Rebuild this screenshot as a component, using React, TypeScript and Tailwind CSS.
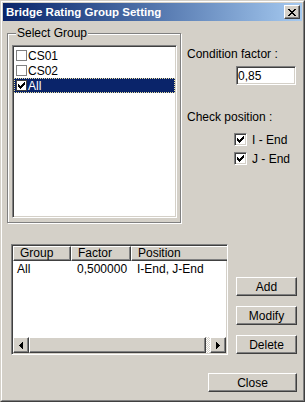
import React from "react";

const raised =
  "border border-t-white border-l-white border-r-[#404040] border-b-[#404040] shadow-[inset_-1px_-1px_0_#808080] bg-[#d4d0c8]";
const sunken =
  "border border-t-[#808080] border-l-[#808080] border-r-white border-b-white shadow-[inset_1px_1px_0_#404040,inset_-1px_-1px_0_#d4d0c8]";

function CheckPixels({ ox, oy }: { ox: number; oy: number }) {
  const cols = [2, 3, 4, 3, 2, 1, 0];
  return (
    <>
      {cols.map((y, i) => (
        <rect key={i} x={ox + i} y={oy + y} width={1} height={3} fill="#000" />
      ))}
    </>
  );
}

function ListCheck({ checked }: { checked?: boolean }) {
  return (
    <div
      className={`w-[11px] h-[11px] shrink-0 bg-white border ${
        checked ? "border-[#404040]" : "border-[#808080]"
      }`}
    >
      {checked && (
        <svg width="9" height="9" shapeRendering="crispEdges">
          <CheckPixels ox={1} oy={1} />
        </svg>
      )}
    </div>
  );
}

function ClassicCheck() {
  return (
    <div className={`w-[13px] h-[13px] shrink-0 bg-white ${sunken}`}>
      <svg width="11" height="11" shapeRendering="crispEdges">
        <CheckPixels ox={2} oy={2} />
      </svg>
    </div>
  );
}

function Btn({ label, w }: { label: string; w: string }) {
  return (
    <div className={`${w} h-[19px] ${raised} flex items-center justify-center leading-[14px]`}>
      {label}
    </div>
  );
}

function Arrow({ dir }: { dir: "l" | "r" }) {
  return (
    <div className={`w-[16px] h-full shrink-0 ${raised} flex items-center justify-center`}>
      <svg width="4" height="7" shapeRendering="crispEdges">
        {dir === "l" ? (
          <polygon points="4,0 4,7 0,3.5" fill="#000" />
        ) : (
          <polygon points="0,0 0,7 4,3.5" fill="#000" />
        )}
      </svg>
    </div>
  );
}

export default function App() {
  return (
    <div className="w-[305px] h-[402px] bg-[#d4d0c8] font-['Liberation_Sans',Arial,sans-serif] text-[12px] text-black border border-t-[#d4d0c8] border-l-[#d4d0c8] border-r-[#404040] border-b-[#404040]">
      <div className="h-full border border-t-white border-l-white border-r-[#808080] border-b-[#808080] p-px flex flex-col">
        {/* Title bar */}
        <div className="h-[18px] shrink-0 flex items-center justify-between pl-[3px] pr-[2px] bg-linear-to-r from-[#0a246a] to-[#a6caf0]">
          <span className="text-white font-bold text-[11.5px] leading-[13px]">
            Bridge Rating Group Setting
          </span>
          <div className={`w-[16px] h-[14px] ${raised} flex items-center justify-center`}>
            <svg width="8" height="7" shapeRendering="crispEdges">
              <path d="M0.5 0 L7.5 7 M7.5 0 L0.5 7" stroke="#000" strokeWidth="1.6" />
            </svg>
          </div>
        </div>

        {/* Top section */}
        <div className="flex mt-[6px] shrink-0">
          <div className="ml-[4px] w-[174px] h-[196px] relative">
            <div className="mt-[6px] h-[190px] border border-[#808080] shadow-[inset_1px_1px_0_white,1px_1px_0_white] pt-[11px] pl-[4px]">
              <div className={`w-[165px] h-[173px] bg-white p-px ${sunken}`}>
                <div className="pt-px flex flex-col">
                  <div className="h-[15px] flex items-center pl-[2px]">
                    <ListCheck />
                    <span className="ml-[1px] leading-[14px]">CS01</span>
                  </div>
                  <div className="h-[15px] flex items-center pl-[2px]">
                    <ListCheck />
                    <span className="ml-[1px] leading-[14px]">CS02</span>
                  </div>
                  <div className="h-[15px] flex items-center pl-px bg-[#0a246a] text-white border border-dotted border-[#e8e0a0]">
                    <ListCheck checked />
                    <span className="ml-[1px] leading-[14px]">All</span>
                  </div>
                </div>
              </div>
            </div>
            <span className="absolute left-[9px] top-0 px-[1px] bg-[#d4d0c8] leading-[13px]">
              Select Group
            </span>
          </div>

          <div className="ml-[6px] flex flex-col">
            <div className="mt-[20px] leading-[14px]">Condition factor :</div>
            <div className={`mt-[5px] ml-[49px] w-[60px] h-[19px] bg-white pl-[1px] flex items-center leading-[14px] ${sunken}`}>
              0,85
            </div>
            <div className="mt-[25px] leading-[14px]">Check position :</div>
            <div className="mt-[6px] h-[19px] flex items-center pl-[47px] gap-[5px]">
              <ClassicCheck />
              <span className="leading-[14px]">I - End</span>
            </div>
            <div className="h-[19px] flex items-center pl-[47px] gap-[5px]">
              <ClassicCheck />
              <span className="leading-[14px]">J - End</span>
            </div>
          </div>
        </div>

        {/* Lower section */}
        <div className="flex mt-[21px] shrink-0">
          <div className={`ml-[8px] w-[217px] h-[111px] bg-white p-px flex flex-col overflow-hidden ${sunken}`}>
            <div className="flex h-[15px] shrink-0">
              <div className={`w-[58px] shrink-0 pl-[6px] leading-[13px] ${raised}`}>Group</div>
              <div className={`w-[60px] shrink-0 pl-[6px] leading-[13px] ${raised}`}>Factor</div>
              <div className={`w-[100px] shrink-0 pl-[6px] leading-[13px] ${raised}`}>Position</div>
            </div>
            <div className="flex h-[15px] items-center shrink-0 whitespace-nowrap leading-[14px]">
              <div className="w-[58px] shrink-0 pl-[4px]">All</div>
              <div className="w-[60px] shrink-0 pl-[6px]">0,500000</div>
              <div className="shrink-0 pl-[6px]">I-End, J-End</div>
            </div>
            <div className="flex-1" />
            <div className="flex h-[16px] shrink-0">
              <Arrow dir="l" />
              <div className={`flex-1 ${raised}`} />
              <div className="w-[4px] shrink-0 bg-[image:repeating-conic-gradient(#ffffff_0%_25%,#d4d0c8_0%_50%)] bg-[length:2px_2px]" />
              <Arrow dir="r" />
            </div>
          </div>
          <div className="ml-[8px] pt-[33px] flex flex-col gap-[10px]">
            <Btn label="Add" w="w-[61px]" />
            <Btn label="Modify" w="w-[61px]" />
            <Btn label="Delete" w="w-[61px]" />
          </div>
        </div>

        <div className="mt-[18px] self-end mr-[5px]">
          <Btn label="Close" w="w-[89px]" />
        </div>
      </div>
    </div>
  );
}
